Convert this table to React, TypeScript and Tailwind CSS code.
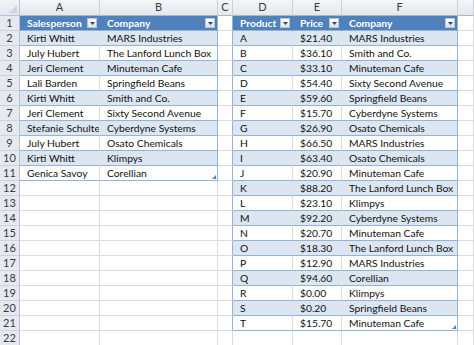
import React from 'react'

const font = { fontFamily: 'Lato, "Liberation Sans", sans-serif' }

const people: [string, string][] = [
  ['Kirti Whitt', 'MARS Industries'],
  ['July Hubert', 'The Lanford Lunch Box'],
  ['Jeri Clement', 'Minuteman Cafe'],
  ['Lali Barden', 'Springfield Beans'],
  ['Kirti Whitt', 'Smith and Co.'],
  ['Jeri Clement', 'Sixty Second Avenue'],
  ['Stefanie Schulte', 'Cyberdyne Systems'],
  ['July Hubert', 'Osato Chemicals'],
  ['Kirti Whitt', 'Klimpys'],
  ['Genica Savoy', 'Corellian'],
]

const products: [string, string, string][] = [
  ['A', '$21.40', 'MARS Industries'],
  ['B', '$36.10', 'Smith and Co.'],
  ['C', '$33.10', 'Minuteman Cafe'],
  ['D', '$54.40', 'Sixty Second Avenue'],
  ['E', '$59.60', 'Springfield Beans'],
  ['F', '$15.70', 'Cyberdyne Systems'],
  ['G', '$26.90', 'Osato Chemicals'],
  ['H', '$66.50', 'MARS Industries'],
  ['I', '$63.40', 'Osato Chemicals'],
  ['J', '$20.90', 'Minuteman Cafe'],
  ['K', '$88.20', 'The Lanford Lunch Box'],
  ['L', '$23.10', 'Klimpys'],
  ['M', '$92.20', 'Cyberdyne Systems'],
  ['N', '$20.70', 'Minuteman Cafe'],
  ['O', '$18.30', 'The Lanford Lunch Box'],
  ['P', '$12.90', 'MARS Industries'],
  ['Q', '$94.60', 'Corellian'],
  ['R', '$0.00', 'Klimpys'],
  ['S', '$0.20', 'Springfield Beans'],
  ['T', '$15.70', 'Minuteman Cafe'],
]

const widths = ['w-[80px]', 'w-[118px]', 'w-[15px]', 'w-[60px]', 'w-[49px]', 'w-[116px]', 'flex-1']
const letters = ['A', 'B', 'C', 'D', 'E', 'F', '']

const FilterButton = () => (
  <span className="ml-auto mr-[2px] w-[10px] h-[10px] shrink-0 flex items-center justify-center bg-gradient-to-b from-white to-[#dde2e8] border border-[#b9c4d2]">
    <svg width="5" height="3" viewBox="0 0 5 3">
      <path d="M0 0h5L2.5 3z" fill="#3d4450" />
    </svg>
  </span>
)

const Handle = () => (
  <svg className="absolute right-[1px] bottom-[1px]" width="4" height="4" viewBox="0 0 4 4">
    <path d="M4 0v4H0z" fill="#4f81bd" />
  </svg>
)

type CellInfo = {
  text?: string
  header?: boolean
  band?: boolean
  inTable?: boolean
  rightEdge?: boolean
  beforeTable?: boolean
  handle?: boolean
}

function cellFor(row: number, col: number): CellInfo {
  // table 1: A-B, rows 1-11
  if (col <= 1 && row <= 11) {
    return {
      inTable: true,
      header: row === 1,
      band: row > 1 && row % 2 === 0,
      rightEdge: col === 1,
      handle: col === 1 && row === 11,
      text: row === 1 ? ['Salesperson', 'Company'][col] : people[row - 2][col],
    }
  }
  // table 2: D-F, rows 1-21
  if (col >= 3 && col <= 5 && row <= 21) {
    return {
      inTable: true,
      header: row === 1,
      band: row > 1 && row % 2 === 0,
      rightEdge: col === 5,
      handle: col === 5 && row === 21,
      text: row === 1 ? ['Product', 'Price', 'Company'][col - 3] : products[row - 2][col - 3],
    }
  }
  return { beforeTable: col === 2 && row <= 21 }
}

const Cell = ({ row, col }: { row: number; col: number }) => {
  const c = cellFor(row, col)
  let bg = 'bg-white'
  if (c.header) bg = 'bg-[#4f81bd]'
  else if (c.band) bg = 'bg-[#dce6f1]'

  let br = 'border-r-[#dadcdd]'
  if (c.rightEdge || c.beforeTable) br = 'border-r-[#95b3d7]'
  else if (c.header) br = 'border-r-[#4f81bd]'
  else if (c.band) br = 'border-r-[#dce6f1]'

  const bb = c.inTable ? 'border-b-[#95b3d7]' : 'border-b-[#dadcdd]'
  const txt = c.header ? 'text-white font-bold' : 'text-[#111]'

  return (
    <div className={`relative h-[15px] shrink-0 border-r border-b flex items-center pl-[7px] whitespace-nowrap overflow-hidden ${widths[col]} ${bg} ${br} ${bb} ${txt}`}>
      <span className="leading-none">{c.text}</span>
      {c.header && <FilterButton />}
      {c.handle && <Handle />}
    </div>
  )
}

export default function App() {
  const rows = Array.from({ length: 22 }, (_, i) => i + 1)
  return (
    <div className="w-[474px] h-[345px] overflow-hidden bg-white text-[10.3px]" style={font}>
      {/* column headers */}
      <div className="flex h-[16px]">
        <div className="relative w-[20px] shrink-0 bg-gradient-to-b from-[#f2f4f7] to-[#e3e7ec] border-r border-b border-[#b9c2cd]">
          <svg className="absolute right-[2px] bottom-[2px]" width="8" height="8" viewBox="0 0 8 8">
            <path d="M8 0v8H0z" fill="#cfd5dc" />
          </svg>
        </div>
        {letters.map((l, i) => (
          <div
            key={i}
            className={`shrink-0 flex items-center justify-center text-[#3b3b3b] text-[11px] bg-gradient-to-b from-[#f4f6f8] to-[#e4e8ec] border-r border-b border-r-[#cdd2d8] border-b-[#aeb7c2] ${widths[i]}`}
          >
            {l}
          </div>
        ))}
      </div>

      {rows.map((r) => (
        <div key={r} className="flex">
          <div className="w-[20px] h-[15px] shrink-0 flex items-center justify-center text-[#3b3b3b] text-[11px] bg-[#e6eaf0] border-r border-b border-r-[#b9c2cd] border-b-[#cdd3db]">
            {r}
          </div>
          {letters.map((_, c) => (
            <Cell key={c} row={r} col={c} />
          ))}
        </div>
      ))}
    </div>
  )
}
